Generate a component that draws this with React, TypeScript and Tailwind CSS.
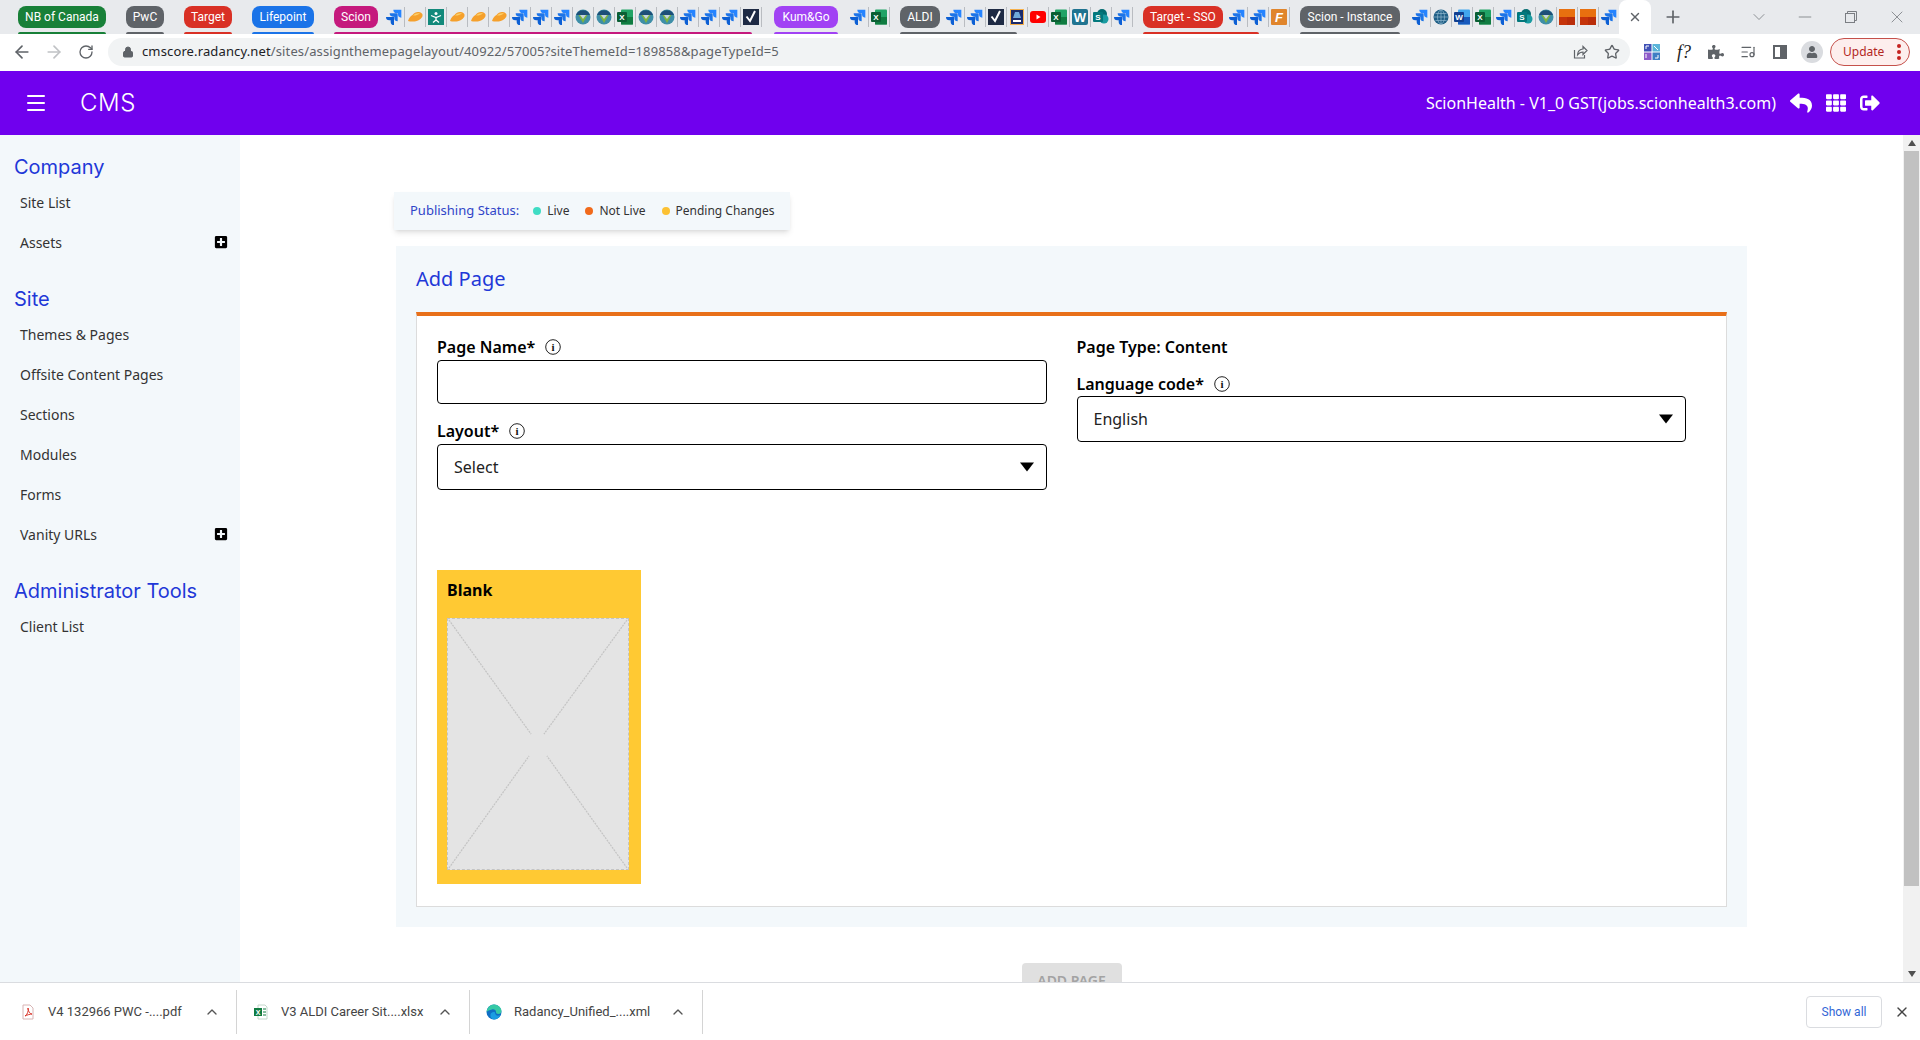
import React from "react";
import { ChevronUp, ChevronDown, X, Plus, Minus, ArrowLeft, ArrowRight, RotateCw, Lock, Star, ListMusic, Menu } from "lucide-react";
import { FaReply, FaTh, FaSignOutAlt, FaPlusSquare, FaPuzzlePiece, FaUser } from "react-icons/fa";

const Jira = () => (
  <svg viewBox="0 0 24 24" className="w-4 h-4">
    <path d="M23 1H11a5 5 0 0 0 5 5h2v2a5 5 0 0 0 5 5z" fill="#2684ff" />
    <path d="M17.500 6.500h-12a5 5 0 0 0 5 5h2v2a5 5 0 0 0 5 5z" fill="#1c74e8" />
    <path d="M12 12H0a5 5 0 0 0 5 5h2v2a5 5 0 0 0 5 5z" fill="#0c5fd4" />
  </svg>
);
const Cloud = () => (
  <svg viewBox="0 0 16 16" className="w-4 h-4">
    <path d="M1 12C2 8.500 4 7 5.500 6 7 3.500 10 2.500 12 3c2.500.5 4 2 3.500 4-.6 2.500-4 5-8 5.500-2.500.3-5 0-6.500-.5z" fill="#f5a02c" />
    <path d="M6 6.500C8 4.500 10.500 3.800 13 4.500 11 5.800 8.500 6.700 6 6.500z" fill="#fcd06a" />
  </svg>
);
const Teal = () => (
  <svg viewBox="0 0 16 16" className="w-4 h-4">
    <rect width="16" height="16" fill="#12897b" />
    <circle cx="8" cy="4.500" r="1.500" fill="#fff" />
    <path d="M3 6.500l5 2 5-2M8 8.500v2.500M8 11l-3 2.500M8 11l3 2.500" stroke="#fff" strokeWidth="1.300" fill="none" />
  </svg>
);
const Shield = () => (
  <svg viewBox="0 0 16 16" className="w-4 h-4">
    <circle cx="8" cy="8" r="7.500" fill="#3f8fa8" />
    <path d="M1 6a7.500 7.500 0 0 1 14 0z" fill="#1d4f78" />
    <path d="M3.500 6h9L8 14z" fill="#7cb342" />
    <path d="M5 6h6L8 10z" fill="#c5d4dc" />
  </svg>
);
const Excel = () => (
  <svg viewBox="0 0 16 16" className="w-4 h-4">
    <rect x="4" y="0.500" width="12" height="15" rx="1" fill="#21a366" />
    <rect x="4" y="8" width="12" height="7.500" fill="#107c41" />
    <rect x="0" y="3" width="10" height="10" rx="1" fill="#0b5f34" />
    <text x="5" y="11" textAnchor="middle" fontSize="8" fontWeight="700" fill="#fff" fontFamily="Liberation Sans">X</text>
  </svg>
);
const Word = () => (
  <svg viewBox="0 0 16 16" className="w-4 h-4">
    <rect x="4" y="0.500" width="12" height="15" rx="1" fill="#41a5ee" />
    <rect x="4" y="8" width="12" height="7.500" fill="#185abd" />
    <rect x="0" y="3" width="10" height="10" rx="1" fill="#103f91" />
    <text x="5" y="11" textAnchor="middle" fontSize="8" fontWeight="700" fill="#fff" fontFamily="Liberation Sans">W</text>
  </svg>
);
const Check = () => (
  <svg viewBox="0 0 16 16" className="w-4 h-4">
    <rect width="16" height="16" fill="#1e2a44" />
    <path d="M3.500 7.500L7 12l5-10" stroke="#fff" strokeWidth="2" fill="none" />
  </svg>
);
const Aldi = () => (
  <svg viewBox="0 0 16 16" className="w-4 h-4">
    <rect x="1.500" y="0.500" width="13" height="15" fill="#1b2a6b" stroke="#f6b04a" />
    <path d="M4 9l2-6h4l2 6z" fill="#6fa8dc" />
    <rect x="4" y="11" width="8" height="2" fill="#fff" />
  </svg>
);
const Youtube = () => (
  <svg viewBox="0 0 16 16" className="w-4 h-4">
    <rect y="2" width="16" height="12" rx="3" fill="#f00" />
    <path d="M6.500 5.500v5l4-2.500z" fill="#fff" />
  </svg>
);
const WBox = () => (
  <svg viewBox="0 0 16 16" className="w-4 h-4">
    <rect width="16" height="16" rx="2" fill="#1f7390" />
    <text x="8" y="13" textAnchor="middle" fontSize="13" fontWeight="700" fill="#fff" fontFamily="Liberation Sans">W</text>
  </svg>
);
const Sharepoint = () => (
  <svg viewBox="0 0 16 16" className="w-4 h-4">
    <circle cx="9" cy="5" r="5" fill="#036c70" />
    <circle cx="11" cy="10" r="4.500" fill="#1a9ba1" />
    <rect y="3" width="10" height="10" rx="1" fill="#03787c" />
    <text x="5" y="11" textAnchor="middle" fontSize="8" fontWeight="700" fill="#fff" fontFamily="Liberation Sans">S</text>
  </svg>
);
const FBox = () => (
  <svg viewBox="0 0 16 16" className="w-4 h-4">
    <rect width="16" height="16" rx="1" fill="#e0852c" />
    <text x="8" y="13" textAnchor="middle" fontSize="13" fontWeight="700" fontStyle="italic" fill="#fff" fontFamily="Liberation Sans">F</text>
  </svg>
);
const Globe = () => (
  <svg viewBox="0 0 16 16" className="w-4 h-4">
    <circle cx="8" cy="8" r="7.500" fill="#1f5f86" />
    <path d="M1 8h14M8 1v14M2.500 4.500h11M2.500 11.500h11" stroke="#8fb8cf" strokeWidth=".7" />
    <ellipse cx="8" cy="8" rx="3.500" ry="7" fill="none" stroke="#8fb8cf" strokeWidth=".7" />
  </svg>
);
const Brick = () => (
  <svg viewBox="0 0 16 16" className="w-4 h-4">
    <rect width="16" height="16" fill="#d9480f" />
    <rect width="16" height="8" fill="#e8700f" />
    <rect x="8" y="8" width="8" height="8" fill="#b92d0a" />
    <rect y="8" width="8" height="8" fill="#c5340a" />
  </svg>
);

const Cell = ({ icon }: { icon: React.ReactNode }) => (
  <div className="box-content w-5 h-5 border-r border-[#b9bcc1] flex items-center justify-center">{icon}</div>
);

const J = <Jira />, C = <Cloud />, S = <Shield />, E = <Excel />, K = <Check />;

const Pill = ({ label, bg, cls }: { label: string; bg: string; cls: string }) => (
  <div className={"h-5.5 rounded-lg flex items-center justify-center text-xs text-white whitespace-nowrap " + bg + " " + cls}>{label}</div>
);

const Cells = ({ items, cls }: { items: React.ReactNode[]; cls: string }) => (
  <div className={"flex h-5.5 items-center " + cls}>
    {items.map((it, i) => (
      <Cell key={i} icon={it} />
    ))}
  </div>
);

const Group = ({ children, line, width, cls = "" }: { children: React.ReactNode; line: string; width?: string; cls?: string }) => (
  <div className={"flex flex-col pt-1.5 " + cls}>
    <div className="flex">{children}</div>
    <div className={"mt-1 h-0.5 rounded-t " + line + " " + (width ?? "")} />
  </div>
);

const Info = () => (
  <svg viewBox="0 0 16 16" className="w-4 h-4 ml-2.5">
    <circle cx="8" cy="8" r="7.300" fill="none" stroke="#222" strokeWidth="1" />
    <text x="8" y="12" textAnchor="middle" fontSize="11" fill="#111" fontFamily="Liberation Serif">i</text>
  </svg>
);

const Caret = () => (
  <svg viewBox="0 0 14 9" className="w-3.5 h-2.5">
    <path d="M0 0h14L7 9z" fill="#000" />
  </svg>
);

const Label = ({ children, info = true, cls }: { children: React.ReactNode; info?: boolean; cls: string }) => (
  <div className={"flex items-center text-base font-semibold text-black " + cls}>
    {children}
    {info && <Info />}
  </div>
);

const NavItem = ({ label, plus }: { label: string; plus?: boolean }) => (
  <div className="flex items-center justify-between h-10 pl-5 pr-3 text-sm text-[#333]">
    <span>{label}</span>
    {plus && <FaPlusSquare className="w-3.5 h-3.5 mb-0.5 text-black" />}
  </div>
);

const Heading = ({ children, cls = "" }: { children: React.ReactNode; cls?: string }) => (
  <div className={"h-6 pl-3.5 flex items-center text-xl text-[#1f38d8] font-['Inter',sans-serif] " + cls}>{children}</div>
);

const Dot = ({ color, label }: { color: string; label: string }) => (
  <div className="flex items-center gap-1.5 text-xs text-[#333]">
    <span className={"w-2 h-2 rounded-full " + color} />
    {label}
  </div>
);

const Download = ({ icon, name }: { icon: React.ReactNode; name: string }) => (
  <div className="w-58.25 h-11 border-r border-[#d4d4d4] flex items-center pl-4 pr-4 text-[13px] text-[#444]">
    <span className="w-4 h-4 flex items-center justify-center">{icon}</span>
    <span className="ml-3">{name}</span>
    <ChevronUp className="w-4 h-4 ml-auto text-[#555]" />
  </div>
);

export default function App() {
  return (
    <div className="h-[1040px] w-full flex flex-col overflow-hidden bg-white font-['Noto_Sans',sans-serif]">
      {/* tab strip */}
      <div className="flex bg-[#e8eaed] pl-4.5 h-8.5 shrink-0 font-['Roboto',sans-serif]">
        <Group line="bg-[#188038]" width="w-22"><Pill label="NB of Canada" bg="bg-[#188038]" cls="w-22" /></Group>
        <Group cls="ml-5" line="bg-[#5f6368]"><Pill label="PwC" bg="bg-[#5f6368]" cls="w-9.5" /></Group>
        <Group cls="ml-5" line="bg-[#d93025]"><Pill label="Target" bg="bg-[#d93025]" cls="w-12" /></Group>
        <Group cls="ml-5" line="bg-[#1a73e8]"><Pill label="Lifepoint" bg="bg-[#1a73e8]" cls="w-15.5" /></Group>
        <Group cls="ml-5" line="bg-[#c5197d]" width="w-[418px]">
          <Pill label="Scion" bg="bg-[#c5197d]" cls="w-11" />
          <Cells cls="ml-1.5" items={[J, C, <Teal />, C, C, C, J, J, J, S, S, E, S, S, J, J, J, K]} />
        </Group>
        <Group cls="ml-3" line="bg-[#a142f4]" width="w-16">
          <Pill label="Kum&Go" bg="bg-[#a142f4]" cls="w-16" />
          <Cells cls="ml-2.5" items={[J, E]} />
        </Group>
        <Group cls="ml-2.5" line="bg-[#5f6368]" width="w-[117px]">
          <Pill label="ALDI" bg="bg-[#5f6368]" cls="w-10" />
          <Cells cls="ml-1" items={[J, J, K, <Aldi />, <Youtube />, E, <WBox />, <Sharepoint />, J]} />
        </Group>
        <Group cls="ml-2.5" line="bg-[#d93025]" width="w-[116px]">
          <Pill label="Target - SSO" bg="bg-[#d93025]" cls="w-20" />
          <Cells cls="ml-1" items={[J, J, <FBox />]} />
        </Group>
        <Group cls="ml-2.5" line="bg-[#5f6368]" width="w-25">
          <Pill label="Scion - Instance" bg="bg-[#5f6368]" cls="w-25" />
          <Cells cls="ml-2.5" items={[J, <Globe />, <Word />, E, J, <Sharepoint />, S, <Brick />, <Brick />]} />
        </Group>
        <div className="w-5 h-5.5 mt-1.5 flex items-center justify-center">
          <Jira />
        </div>
        <div className="w-8 h-8.5 bg-white rounded-t-lg flex items-center justify-center">
          <X className="w-3.5 h-3.5 text-[#5f6368]" strokeWidth={2.5} />
        </div>
        <div className="ml-3 flex items-center">
          <Plus className="w-5 h-5 text-[#5f6368]" strokeWidth={2} />
        </div>
        <div className="ml-auto flex items-center text-[#7b7e83]">
          <div className="w-11.5 flex justify-center"><ChevronDown className="w-5 h-5" strokeWidth={1} /></div>
          <div className="w-11.5 flex justify-center"><Minus className="w-5 h-5" strokeWidth={1} /></div>
          <div className="w-11.5 flex justify-center">
            <svg viewBox="0 0 12 12" className="w-3 h-3" fill="none" stroke="currentColor" strokeWidth="1">
              <rect x="0.500" y="2.500" width="9" height="9" />
              <path d="M2.500 2.500v-2h9v9h-2" />
            </svg>
          </div>
          <div className="w-11.5 flex justify-center"><X className="w-5 h-5" strokeWidth={1} /></div>
        </div>
      </div>

      {/* toolbar */}
      <div className="flex items-start pt-1 pl-1.5 pr-2.5 h-[37px] shrink-0 bg-white">
        <div className="w-8 h-7 flex items-center justify-center"><ArrowLeft className="w-5 h-5 text-[#5f6368]" /></div>
        <div className="w-8 h-7 flex items-center justify-center"><ArrowRight className="w-5 h-5 text-[#c0c2c5]" /></div>
        <div className="w-8 h-7 flex items-center justify-center"><RotateCw className="w-4 h-4 text-[#5f6368]" /></div>
        <div className="ml-1.5 flex-1 h-7 rounded-full bg-[#f1f3f4] flex items-center pl-3.5 pr-2.5 gap-2 text-[13px] tracking-[0.01em] text-[#5f6368]">
          <Lock className="w-3 h-3 text-[#5f6368] fill-[#5f6368]" />
          <span className="whitespace-nowrap">
            <span className="text-[#202124]">cmscore.radancy.net</span>/sites/assignthemepagelayout/40922/57005?siteThemeId=189858&amp;pageTypeId=5
          </span>
          <div className="ml-auto flex items-center gap-4">
            <svg viewBox="0 0 16 16" className="w-4 h-4" fill="none" stroke="#5f6368" strokeWidth="1.200">
              <path d="M2.500 6v8h10v-3" />
              <path d="M5.500 11c0-3.500 2.500-6 5.500-6V2.500l4 4-4 4V8c-2.500 0-4 1-5.500 3z" />
            </svg>
            <Star className="w-4 h-4 text-[#5f6368]" />
          </div>
        </div>
        <div className="ml-1.5 flex items-center h-7 text-[#5f6368]">
          <div className="w-8 flex justify-center">
            <svg viewBox="0 0 16 16" className="w-4 h-4">
              <rect x="0" y="0" width="7.500" height="7.500" fill="#3f51b5" />
              <rect x="8.500" y="0" width="7.500" height="7.500" fill="#5bb5d9" />
              <rect x="0" y="8.500" width="7.500" height="7.500" fill="#8e5bc9" />
              <rect x="8.500" y="8.500" width="7.500" height="7.500" fill="#3f7fc4" />
              <path d="M2 5V2h3M14 11v3h-3M10 2l4 4M2 10v4" stroke="#fff" fill="none" />
            </svg>
          </div>
          <div className="w-8 flex justify-center text-lg italic text-[#222] font-['Liberation_Serif',serif]">f?</div>
          <div className="w-8 flex justify-center"><FaPuzzlePiece className="w-4 h-4" /></div>
          <div className="w-8 flex justify-center"><ListMusic className="w-4 h-4" strokeWidth={1.75} /></div>
          <div className="w-8 flex justify-center">
            <svg viewBox="0 0 14 14" className="w-3.5 h-3.5">
              <rect x="1" y="1" width="12" height="12" fill="none" stroke="#5f6368" strokeWidth="2" />
              <rect x="7" y="1" width="6" height="12" fill="#5f6368" />
            </svg>
          </div>
          <div className="w-8 flex justify-center">
            <div className="w-5.5 h-5.5 rounded-full bg-[#dadce0] flex items-center justify-center"><FaUser className="w-3 h-3 text-[#5f6368]" /></div>
          </div>
        </div>
        <div className="ml-0.5 w-20 h-7 rounded-full border border-[#c5504a] bg-[#fdeeed] flex items-center pl-3 pr-2 justify-between text-xs text-[#b3261e]">
          <span>Update</span>
          <span className="flex flex-col gap-0.5">
            <span className="w-1 h-1 rounded-full bg-[#c5221f]" />
            <span className="w-1 h-1 rounded-full bg-[#c5221f]" />
            <span className="w-1 h-1 rounded-full bg-[#c5221f]" />
          </span>
        </div>
      </div>

      {/* app header */}
      <div className="h-16 shrink-0 bg-[#7000ee] flex items-center pl-6 pr-10 text-white">
        <Menu className="w-6 h-6" />
        <span className="ml-8 text-2xl font-light tracking-wide font-['Inter',sans-serif]">CMS</span>
        <span className="ml-auto mr-3.5 text-base">ScionHealth - V1_0 GST(jobs.scionhealth3.com)</span>
        <div className="flex items-center gap-3.5">
          <FaReply className="w-5.5 h-5.5" />
          <FaTh className="w-5 h-5" />
          <FaSignOutAlt className="w-5 h-5" />
        </div>
      </div>

      {/* body */}
      <div className="flex-1 min-h-0 flex">
        <aside className="w-60 shrink-0 bg-[#f3f8fb] pt-5">
          <Heading>Company</Heading>
          <div className="mt-1">
            <NavItem label="Site List" />
            <NavItem label="Assets" plus />
          </div>
          <Heading cls="mt-6">Site</Heading>
          <div className="mt-1">
            <NavItem label="Themes & Pages" />
            <NavItem label="Offsite Content Pages" />
            <NavItem label="Sections" />
            <NavItem label="Modules" />
            <NavItem label="Forms" />
            <NavItem label="Vanity URLs" plus />
          </div>
          <Heading cls="mt-6">Administrator Tools</Heading>
          <div className="mt-1">
            <NavItem label="Client List" />
          </div>
        </aside>

        <main className="flex-1 min-w-0 overflow-hidden pt-14.25">
          <div className="w-[1351px] mx-auto">
            <div className="-ml-0.5 w-99 h-9.5 bg-[#f3f8fb] shadow-md flex items-center pl-4 gap-4 text-xs">
              <span className="-mr-0.5 text-[13px] text-[#2f45c8]">Publishing Status:</span>
              <Dot color="bg-[#3fdcc4]" label="Live" />
              <Dot color="bg-[#f16a1b]" label="Not Live" />
              <Dot color="bg-[#fcc133]" label="Pending Changes" />
            </div>

            <div className="mt-4 bg-[#f3f8fb] px-5 pt-5 pb-5">
              <div className="h-6.5 flex items-center text-xl text-[#1f38d8]">Add Page</div>
              <div className="mt-5 bg-white border border-[#dcdcdc] border-t-4 border-t-[#e8701a] pl-5 pr-10 pt-4.5 pb-5.5">
                <div className="grid grid-cols-2 gap-x-7.5">
                  <div>
                    <Label cls="h-6.5">Page Name*</Label>
                    <div className="h-11 border border-black rounded" />
                    <Label cls="h-6.5 mt-3.5">Layout*</Label>
                    <div className="h-11.5 border border-black rounded flex items-center justify-between pl-4 pr-3 text-base text-[#222]">
                      <span>Select</span>
                      <Caret />
                    </div>
                  </div>
                  <div>
                    <Label cls="h-6.5" info={false}>Page Type: Content</Label>
                    <Label cls="h-6 mt-3">Language code*</Label>
                    <div className="h-11.5 border border-black rounded flex items-center justify-between pl-4 pr-3 text-base text-[#222]">
                      <span>English</span>
                      <Caret />
                    </div>
                  </div>
                </div>

                <div className="mt-20 w-51 bg-[#ffc933] pl-2.5 pr-3 pt-2 pb-3.5">
                  <div className="h-6 flex items-center text-base font-bold text-black">Blank</div>
                  <div className="mt-4 h-63 bg-[#e4e4e4] border border-dashed border-[#c4c4c4]">
                    <svg viewBox="0 0 182 252" preserveAspectRatio="none" className="w-full h-full">
                      <path d="M1 1L84 116M181 1L97 116M1 251L82 138M181 251L100 138" stroke="#c4c4c4" strokeWidth="1.250" strokeDasharray="2 1" fill="none" />
                    </svg>
                  </div>
                </div>
              </div>
            </div>

            <div className="mt-9 flex justify-center">
              <div className="w-25 h-9 rounded-sm bg-[#e0e0e0] flex items-center justify-center text-sm font-semibold text-[#a3a3a3] uppercase">Add Page</div>
            </div>
          </div>
        </main>

        <div className="w-[17px] shrink-0 bg-[#f1f1f1] flex flex-col items-stretch">
          <div className="h-4 flex items-center justify-center">
            <svg viewBox="0 0 8 6" className="w-2 h-1.5"><path d="M0 6h8L4 0z" fill="#505050" /></svg>
          </div>
          <div className="flex-1 bg-[#c1c1c1] mx-px" />
          <div className="h-20" />
          <div className="h-4 flex items-center justify-center">
            <svg viewBox="0 0 8 6" className="w-2 h-1.5"><path d="M0 0h8L4 6z" fill="#505050" /></svg>
          </div>
        </div>
      </div>

      {/* downloads */}
      <div className="h-14.5 shrink-0 border-t border-[#dadce0] bg-white flex items-center pl-1 pr-2.5 font-['Roboto',sans-serif]">
        <Download
          name="V4 132966 PWC -....pdf"
          icon={
            <svg viewBox="0 0 16 16" className="w-4 h-4">
              <path d="M3 1h7l3 3v11H3z" fill="#fff" stroke="#d8b4b4" />
              <path d="M5 12c2-1 4-5 3-8 0 3 2 6 4 6-2 0-5 1-7 2z" fill="none" stroke="#d93025" strokeWidth="1" />
            </svg>
          }
        />
        <Download
          name="V3 ALDI Career Sit....xlsx"
          icon={
            <svg viewBox="0 0 16 16" className="w-4 h-4">
              <path d="M5 1h7l2 2v12H5z" fill="#fff" stroke="#c4d8cc" />
              <rect x="1" y="4" width="8" height="8" fill="#107c41" />
              <path d="M10 5h3M10 8h3M10 11h3" stroke="#107c41" />
              <text x="5" y="10.500" textAnchor="middle" fontSize="7" fontWeight="700" fill="#fff" fontFamily="Liberation Sans">X</text>
            </svg>
          }
        />
        <Download
          name="Radancy_Unified_....xml"
          icon={
            <svg viewBox="0 0 16 16" className="w-4 h-4">
              <circle cx="8" cy="8" r="7.500" fill="#0f6fc4" />
              <path d="M.5 8C1 3.500 4.500.5 8 .5c4 0 7.500 3 7.500 6.500 0 1.500-1 3-3 3-2 0-2.500-1-2.500-2 0-2-2-3-4-2.500C3.500 6 1.500 7 .5 8z" fill="#35c9a5" />
              <path d="M9 8.500c0 3 2.500 4 5.500 2.500-1 3-4 4.500-6.500 4.500-2 0-4-2-3.500-5 .3-2 3-3 4.500-2z" fill="#1b9de2" />
            </svg>
          }
        />
        <div className="ml-auto flex items-center gap-3">
          <div className="w-19 h-8 rounded border border-[#dadce0] flex items-center justify-center text-xs text-[#3367d6]">Show all</div>
          <X className="w-4 h-4 text-[#444]" />
        </div>
      </div>
    </div>
  );
}
